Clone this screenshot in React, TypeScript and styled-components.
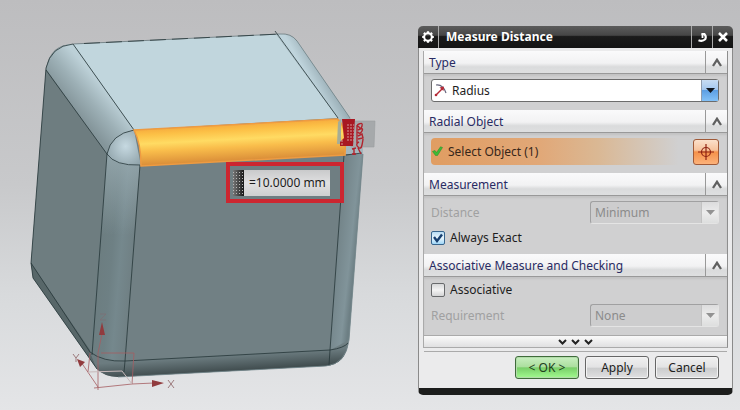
import React from "react";
import styled, { createGlobalStyle, css } from "styled-components";

const GlobalStyle = createGlobalStyle`
  *, *::before, *::after { box-sizing: border-box; }
  body { margin: 0; }
  body, button, input, select {
    font-family: "Noto Sans", "Open Sans", sans-serif;
    font-size: 12px;
    line-height: 16px;
    color: #1d1d1d;
  }
`;

const Workspace = styled.main`
  display: grid;
  grid-template-columns: minmax(410px, 1fr) 315px;
  column-gap: 8px;
  align-items: start;
  min-height: 100vh;
  padding-right: 7px;
  overflow: hidden;
  background: linear-gradient(#bdbdbf 0%, #c8c9cb 45%, #d8dadc 72%, #e4e5e7 100%);
`;

const Viewport = styled.section`
  position: relative;
`;

const Model = styled.svg`
  display: block;
  width: 410px;
  height: 410px;
`;

const Callout = styled.label`
  position: absolute;
  left: 226px;
  top: 162px;
  display: flex;
  align-items: center;
  width: 118px;
  height: 41px;
  padding: 0 10px 0 3px;
  border: 4px solid #cc2630;
  background: #6f7e82;
`;

const Grip = styled.span`
  flex: none;
  width: 11px;
  height: 26px;
  background:
    radial-gradient(circle, #b4b4b4 25%, transparent 45%) 2px 4px / 3px 3px,
    linear-gradient(90deg, #777, #161616);
`;

const Readout = styled.input`
  flex: 1;
  min-width: 0;
  height: 26px;
  padding: 0 0 0 5px;
  border: 0;
  background: linear-gradient(#c9cacb, #e0e0e1 50%, #cfcfd0);
`;

const Dialog = styled.form`
  margin-top: 26px;
  border: 1px solid #8a8a8a;
  border-top: 0;
  border-bottom: 7px solid #1c1d1c;
  border-radius: 5px;
  background: #ebebec;
`;

const TitleBar = styled.header`
  display: flex;
  align-items: stretch;
  height: 22px;
  margin: 0 -1px;
  border-radius: 5px 5px 0 0;
  background: linear-gradient(#5c5c5c 0, #464646 42%, #1b1b1b 48%, #141414 100%);
  color: #fff;
`;

const Title = styled.h1`
  flex: 1;
  margin: 0;
  padding-left: 7px;
  font-size: 12px;
  line-height: 22px;
`;

const TitleButton = styled.button<{ $edge?: "left" | "right" }>`
  display: grid;
  place-items: center;
  width: 21px;
  padding: 0;
  border: 0;
  border-left: ${(p) => (p.$edge === "right" ? "1px solid #aaa" : "0")};
  border-right: ${(p) => (p.$edge === "left" ? "1px solid #aaa" : "0")};
  background: none;
  color: #fff;
`;

const Sections = styled.div`
  margin: 3px 4px 0;
  border: 1px solid #aaa;
  border-top: 0;
  border-right-color: #8e8e8e;
`;

const SectionHead = styled.div`
  display: flex;
  align-items: stretch;
  height: 23px;
  border-bottom: 1px solid #999;
  background: linear-gradient(#fafafb 0%, #f2f2f3 55%, #dadbdc 72%, #dedfe0 100%);
`;

const SectionTitle = styled.h2`
  flex: 1;
  margin: 0;
  padding-left: 5px;
  font-size: 12px;
  font-weight: 400;
  line-height: 23px;
  color: #292b63;
`;

const Collapse = styled.button`
  display: grid;
  place-items: center;
  width: 22px;
  padding: 0;
  border: 0;
  border-left: 1px solid #999;
  background: none;
`;

const SectionBody = styled.div`
  display: flex;
  flex-direction: column;
  gap: 6px;
  padding: 5px 8px 8px 7px;
  background: #d0d0d1;
  box-shadow: inset 0 2px 2px #c2c2c3;
`;

const Row = styled.div`
  display: flex;
  align-items: center;
  justify-content: space-between;
  min-height: 16px;
`;

const SelectBox = styled.div<{ $width: string }>`
  position: relative;
  width: ${(p) => p.$width};
`;

const Select = styled.select<{ $icon?: boolean }>`
  display: block;
  width: 100%;
  height: 23px;
  padding: 0 20px 0 ${(p) => (p.$icon ? "20px" : "4px")};
  appearance: none;
  border: 1px solid #6c6c6c;
  border-radius: 3px;
  background: #fff;
  opacity: 1;
  &:disabled {
    border-color: #a0a0a1 #e4e4e4 #e4e4e4 #a0a0a1;
    background: #cdcdce;
    color: #8b8b8b;
  }
`;

const DropMark = styled.span<{ $off?: boolean }>`
  position: absolute;
  top: 1px;
  right: 1px;
  bottom: 1px;
  display: grid;
  place-items: center;
  width: 17px;
  pointer-events: none;
  border-left: 1px solid #8f9cae;
  background: linear-gradient(#c8dcf2 0%, #a5c8ef 45%, #5d9fe3 50%, #83c1f7 100%);
  ${(p) =>
    p.$off &&
    css`
      border-color: #c2c2c2;
      background: linear-gradient(#dcdcdd, #ececec 50%, #dddede);
    `}
`;

const FieldIcon = styled.svg`
  position: absolute;
  left: 3px;
  top: 4px;
`;

const FieldLabel = styled.label`
  color: #a0a0a1;
`;

const CheckLabel = styled.label`
  display: flex;
  align-items: center;
  gap: 5px;
`;

const Check = styled.input`
  width: 14px;
  height: 14px;
  margin: 0;
  appearance: none;
  border: 1px solid #686a6c;
  border-radius: 2px;
  background: linear-gradient(#d6d7d8, #f4f4f4 50%, #d3d4d5);
  &:checked {
    border-color: #38658d;
    background: linear-gradient(#b8dcf4, #eaf6fd 50%, #9fd6f7);
  }
`;

const CheckBox = styled.span`
  display: grid;
  > * { grid-area: 1 / 1; }
  > svg { pointer-events: none; }
`;

const Selection = styled.div`
  display: flex;
  align-items: center;
  justify-content: space-between;
  height: 27px;
  border-radius: 4px;
  background: linear-gradient(90deg, #e09d62 0%, #e1a878 38%, #dab894 58%, #d0d0d1 86%);
`;

const SelectionLabel = styled.span`
  display: flex;
  align-items: center;
  gap: 5px;
  padding-left: 1px;
  color: #37261a;
`;

const PickButton = styled.button`
  display: grid;
  place-items: center;
  width: 26px;
  height: 26px;
  padding: 0;
  border: 1px solid #a05a38;
  border-radius: 3px;
  background: linear-gradient(#fbe0cb 0%, #f7c39d 42%, #f59149 50%, #fcb27a 100%);
`;

const MoreBar = styled.button`
  display: flex;
  justify-content: center;
  align-items: center;
  gap: 4px;
  width: 100%;
  height: 12px;
  padding: 0;
  border: 0;
  border-top: 1px solid #aaa;
  background: linear-gradient(#fafafa, #e0e0e1);
`;

const Actions = styled.footer`
  display: flex;
  justify-content: flex-end;
  gap: 6px;
  margin: 3px 5px 0;
  padding: 4px 8px 9px;
  border-top: 1px solid #aaa;
`;

const ActionButton = styled.button<{ $primary?: boolean }>`
  width: 64px;
  height: 23px;
  padding: 0;
  border: 1px solid #666;
  border-radius: 3px;
  background: linear-gradient(#f0f0f0 0%, #e3e3e4 48%, #cbcccd 54%, #e0e0e1 100%);
  box-shadow: inset 0 0 0 1px #f3f3f3;
  ${(p) =>
    p.$primary &&
    css`
      border-color: #3f6b3b;
      background: linear-gradient(#c9efc1 0%, #acdf9f 46%, #79cf69 52%, #a2fa90 100%);
      box-shadow: inset 0 0 0 1px #b2dca9;
      color: #20401c;
    `}
`;

const Triangle = ({ color }: { color: string }) => (
  <svg width="9" height="5" viewBox="0 0 9 5" aria-hidden="true">
    <path d="M0 0h9L4.5 5z" fill={color} />
  </svg>
);

type SectionProps = { title: string; children: React.ReactNode };

const Section = ({ title, children }: SectionProps) => (
  <section>
    <SectionHead>
      <SectionTitle>{title}</SectionTitle>
      <Collapse type="button" aria-label={`Collapse ${title}`}>
        <svg width="10" height="9" viewBox="0 0 10 9">
          <path d="M1 8L5 1.8L9 8" fill="none" stroke="#606060" strokeWidth="2.3" />
        </svg>
      </Collapse>
    </SectionHead>
    <SectionBody>{children}</SectionBody>
  </section>
);

type DropProps = { id: string; value: string; width: string; disabled?: boolean; label?: string; children?: React.ReactNode };

const Drop = ({ id, value, width, disabled, label, children }: DropProps) => (
  <SelectBox $width={width}>
    <Select id={id} disabled={disabled} $icon={!!children} aria-label={label}>
      <option>{value}</option>
    </Select>
    {children}
    <DropMark $off={disabled}>
      <Triangle color={disabled ? "#929292" : "#10151c"} />
    </DropMark>
  </SelectBox>
);

const Block = () => (
  <Model viewBox="0 0 410 410" role="img" aria-label="Rounded block with a selected edge blend">
    <defs>
      <linearGradient id="gold" gradientUnits="userSpaceOnUse" x1="238" y1="123" x2="240" y2="161">
        <stop offset="0" stopColor="#f5a83c" />
        <stop offset=".18" stopColor="#fcc046" />
        <stop offset=".42" stopColor="#ffdb63" />
        <stop offset=".62" stopColor="#f9bd4b" />
        <stop offset="1" stopColor="#d98c38" />
      </linearGradient>
      <linearGradient id="slope" gradientUnits="userSpaceOnUse" x1="76" y1="112" x2="104" y2="88">
        <stop offset="0" stopColor="#84959a" />
        <stop offset=".5" stopColor="#9db0b6" />
        <stop offset="1" stopColor="#bcd0d7" />
      </linearGradient>
      <linearGradient id="column" gradientUnits="userSpaceOnUse" x1="99" y1="240" x2="134" y2="243">
        <stop offset="0" stopColor="#6c7d80" />
        <stop offset=".4" stopColor="#6e8084" />
        <stop offset=".65" stopColor="#75888d" />
        <stop offset="1" stopColor="#708084" />
      </linearGradient>
      <linearGradient id="columnLight" x1="0" y1="0" x2="0" y2="1">
        <stop offset="0" stopColor="#a9bcc3" stopOpacity=".6" />
        <stop offset="1" stopColor="#a9bcc3" stopOpacity="0" />
      </linearGradient>
      <linearGradient id="foot" gradientUnits="userSpaceOnUse" x1="220" y1="356" x2="221" y2="372">
        <stop offset="0" stopColor="#6c7c80" />
        <stop offset="1" stopColor="#3f4b4d" />
      </linearGradient>
      <linearGradient id="side" gradientUnits="userSpaceOnUse" x1="337" y1="250" x2="356" y2="252">
        <stop offset="0" stopColor="#74858a" />
        <stop offset=".7" stopColor="#81949a" />
        <stop offset="1" stopColor="#6d7f84" />
      </linearGradient>
      <linearGradient id="rim" gradientUnits="userSpaceOnUse" x1="310" y1="80" x2="324" y2="72">
        <stop offset="0" stopColor="#bfd4dc" />
        <stop offset="1" stopColor="#98acb4" />
      </linearGradient>
      <radialGradient id="ball" cx=".55" cy=".45" r=".6">
        <stop offset="0" stopColor="#c6d9e1" />
        <stop offset="1" stopColor="#93a6ad" />
      </radialGradient>
    </defs>

    <path d="M46 68C49 52 58 44 73 44L280 34Q291 33 297 41L350 118L363 152L349 340Q346 364 326 366L118 377Q103 376 97 369L33 278L31 263Z" fill="#708084" />
    <path d="M46 70L107 154L92 353L31 263Z" fill="#6e7d80" />
    <path d="M31 263L92 353L97 369L33 278Z" fill="#586769" />
    <path d="M73 44L276 34L338 118L134 130Z" fill="#c1d6dd" />
    <path d="M276 34Q291 32 297 41L350 118L345 130L338 118Z" fill="url(#rim)" />
    <path d="M46 69Q51 45 73 44L134 130Q111 135 107 154Z" fill="url(#slope)" />
    <path d="M107 154L140 165L125 361L124 375Q104 376 97 369L90 352Z" fill="url(#column)" />
    <path d="M107 154L140 165L134 235L101 235Z" fill="url(#columnLight)" />
    <path d="M140 165L344 155L330 350L125 361Z" fill="#718084" />
    <path d="M344 154L363 154L349 340L330 350Z" fill="url(#side)" />
    <path d="M90 352Q103 362 125 361L330 350L348 343Q346 364 326 366L118 377Q103 376 97 369Z" fill="url(#foot)" />
    <path d="M107 154Q111 134 134 130L141 166Q113 166 107 154Z" fill="url(#ball)" />
    <path d="M338 119L351 119L363 140V154H345Z" fill="#a4b7be" />

    <g fill="none" stroke="#263639" strokeWidth=".8">
      <path d="M73 44L280 34Q291 33 297 41" stroke="#6c7a7e" />
      <path d="M84 43.500L280 34" strokeDasharray="16 6" />
      <path d="M297 41L350 118M363 154L349 340Q346 364 326 366L118 377" stroke="#74868b" />
      <path d="M46 68Q51 46 73 44M46 70L107 154M46 68L31 263L33 278L97 369" />
      <path d="M73 44L134 130Q111 134 107 154Q115 166 140 165M275 31L338 118" />
      <path d="M107 154L92 355M140 165L125 361L124 372M344 155L330 350L329 365" />
      <path d="M31 263L90 352Q103 362 125 361L330 350Q344 348 348 343" />
      <path d="M346 155L362 153" />
    </g>
    <path d="M134 130L337 119Q347 125 345 155L141 166Q141 143 134 130Z" fill="url(#gold)" stroke="#ee9b42" strokeWidth="1.5" />

    <path d="M352 121H375L374 147H351Z" fill="#a6a9ab" stroke="#9a9da0" strokeWidth=".6" />
    <path d="M338 122L341 119L341 144H337Z" fill="#a5ad96" />
    <path d="M342 119H355L353 146H340V142L344 138Z" fill="#a81822" />
    <path d="M347 125h7M347 128h7M347 131h7M347 134h7M347 137h7M347 140h7M342 140v5" stroke="#d7a7a7" strokeWidth=".9" strokeDasharray="2 1" />
    <path d="M359 124q4-2 3 2t-3 1q-3-2 0-3M358 130q6-3 4 1t-4 1M358 136l4-2 1 4-5 1M359 142q-4 2-1 5t4-2 1-6M357 125v18M354 148v7M352 149l4-1M352 154h4M358 148l3 6" fill="none" stroke="#b1242d" strokeWidth="1.4" />

    <g fill="none" stroke="#9c7a7c" strokeWidth="1">
      <path d="M98 390V353L102 334M94 388L132 384L154 383M98 387L81 362M88 372L90 353M101 353H134L132 384" stroke="#a45d61" strokeWidth=".8" />
      <path d="M88 372L122 371L132 384" stroke="#c7b9ba" />
      <path d="M168 380l6 8M174 380l-6 8M73 354l3 4 3-4M76 358v4" />
      <path d="M100 314h6l-6 6h6" stroke="#806f72" strokeWidth=".7" />
    </g>
    <path d="M102 322L105 335H99ZM164 383L152 380V387ZM77 359L85 362L80 367Z" fill="#913b3e" />
  </Model>
);

export default function App() {
  return (
    <>
      <GlobalStyle />
      <Workspace>
        <Viewport>
          <Block />
          <Callout>
            <Grip />
            <Readout aria-label="Measured radius" readOnly defaultValue="=10.0000 mm" />
          </Callout>
        </Viewport>

        <Dialog onSubmit={(e) => e.preventDefault()}>
          <TitleBar>
            <TitleButton type="button" $edge="left" aria-label="Options">
              <svg width="12" height="12" viewBox="0 0 12 12" fill="none" stroke="#fff">
                <circle cx="6" cy="6" r="3.8" strokeWidth="2" />
                <path d="M6 .2V2M6 10v1.800M.2 6H2M10 6h1.800M1.900 1.900L3 3M9 9l1.100 1.100M10.100 1.900L9 3M3 9l-1.100 1.100" strokeWidth="2.2" />
              </svg>
            </TitleButton>
            <Title>Measure Distance</Title>
            <TitleButton type="button" $edge="right" aria-label="Reset">
              <svg width="11" height="11" viewBox="0 0 11 11" fill="none" stroke="#fff" strokeWidth="2.2">
                <path d="M4.500 2.200H7.500Q9.600 4.500 8.200 7.300Q5.500 9.800 1.500 8.200" />
                <path d="M5.500 1.500V6" strokeWidth="1.800" />
              </svg>
            </TitleButton>
            <TitleButton type="button" $edge="right" aria-label="Close">
              <svg width="10" height="10" viewBox="0 0 10 10" stroke="#fff" strokeWidth="2.5">
                <path d="M1 1L9 9M9 1L1 9" />
              </svg>
            </TitleButton>
          </TitleBar>

          <Sections>
            <Section title="Type">
              <Drop id="type" value="Radius" width="100%" label="Type">
                <FieldIcon width="14" height="14" viewBox="0 0 14 14" fill="none" aria-hidden="true">
                  <path d="M2 2Q9 1 12 10" stroke="#65647b" strokeWidth="1.2" />
                  <path d="M2 12L9 5" stroke="#b42a36" strokeWidth="1.4" />
                  <path d="M10 3.5L9.5 8L5.5 4.5Z" fill="#b42a36" />
                  <circle cx="2" cy="12" r="1.3" fill="#b42a36" />
                </FieldIcon>
              </Drop>
            </Section>

            <Section title="Radial Object">
              <Selection>
                <SelectionLabel>
                  <svg width="11" height="11" viewBox="0 0 11 11" aria-hidden="true">
                    <path d="M.5 5.500L3 4.500L4.500 6.500L8.500 .8L10.500 1.500L5.500 9.500H3.500Z" fill="#3fbb35" stroke="#25862a" strokeWidth=".5" />
                  </svg>
                  Select Object (1)
                </SelectionLabel>
                <PickButton type="button" aria-label="Select object">
                  <svg width="16" height="16" viewBox="0 0 16 16" fill="none" stroke="#8f2414" strokeWidth="1.2">
                    <circle cx="8" cy="8" r="4.5" />
                    <path d="M8 0V16M0 8H16" />
                  </svg>
                </PickButton>
              </Selection>
            </Section>

            <Section title="Measurement">
              <Row>
                <FieldLabel htmlFor="distance">Distance</FieldLabel>
                <Drop id="distance" value="Minimum" width="129px" disabled />
              </Row>
              <Row>
                <CheckLabel>
                  <CheckBox>
                    <Check type="checkbox" defaultChecked />
                    <svg width="14" height="14" viewBox="0 0 14 14">
                      <path d="M3 6L6 10L11 3.5" fill="none" stroke="#173f70" strokeWidth="2.4" />
                    </svg>
                  </CheckBox>
                  Always Exact
                </CheckLabel>
              </Row>
            </Section>

            <Section title="Associative Measure and Checking">
              <Row>
                <CheckLabel>
                  <Check type="checkbox" />
                  Associative
                </CheckLabel>
              </Row>
              <Row>
                <FieldLabel htmlFor="requirement">Requirement</FieldLabel>
                <Drop id="requirement" value="None" width="129px" disabled />
              </Row>
            </Section>

            <MoreBar type="button" aria-label="Show more options">
              {[0, 1, 2].map((n) => (
                <svg key={n} width="9" height="6" viewBox="0 0 9 6">
                  <path d="M1 1L4.5 4.5L8 1" fill="none" stroke="#222" strokeWidth="2" />
                </svg>
              ))}
            </MoreBar>
          </Sections>

          <Actions>
            <ActionButton $primary>&lt; OK &gt;</ActionButton>
            <ActionButton type="button">Apply</ActionButton>
            <ActionButton type="button">Cancel</ActionButton>
          </Actions>
        </Dialog>
      </Workspace>
    </>
  );
}
